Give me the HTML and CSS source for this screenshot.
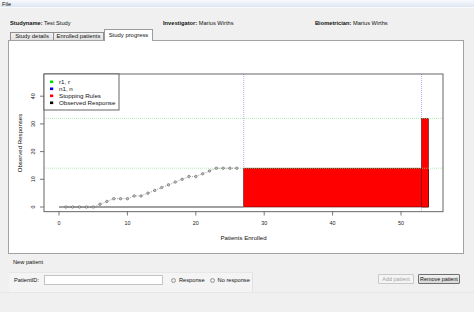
FILE: index.html
```html
<!DOCTYPE html>
<html>
<head>
<meta charset="utf-8">
<link rel="stylesheet" href="styles.css">
</head>
<body>
<div class="menubar"><span class="menu-item">File</span></div>
<div class="header">
  <div><b>Studyname:</b> Test Study</div>
  <div><b>Investigator:</b> Marius Wirths</div>
  <div><b>Biometrician:</b> Marius Wirths</div>
</div>
<div class="tabs">
  <div class="tab t1">Study details</div>
  <div class="tab t2">Enrolled patients</div>
  <div class="tab t3 active">Study progress</div>
</div>
<div class="panel">
  <svg class="plot" width="454" height="212" viewBox="9 41 454 212" xmlns="http://www.w3.org/2000/svg">
    <!-- stopping rules -->
    <rect x="243.7" y="168.2" width="184.7" height="38.8" fill="#ff0000" stroke="#5a0000" stroke-width="0.6"/>
    <rect x="421.5" y="118.4" width="6.9" height="88.6" fill="#ff0000" stroke="#5a0000" stroke-width="0.6"/>
    <!-- r1, r lines -->
    <line x1="44" y1="168.2" x2="443" y2="168.2" stroke="#8fe08f" stroke-width="0.7" stroke-dasharray="1,1"/>
    <line x1="44" y1="118.4" x2="443" y2="118.4" stroke="#8fe08f" stroke-width="0.7" stroke-dasharray="1,1"/>
    <!-- n1, n lines -->
    <line x1="243.7" y1="74" x2="243.7" y2="168" stroke="#a8a8f0" stroke-width="0.9" stroke-dasharray="1,1"/>
    <line x1="421.5" y1="74" x2="421.5" y2="118.2" stroke="#a8a8f0" stroke-width="0.9" stroke-dasharray="1,1"/>
    <line x1="421.5" y1="207.3" x2="421.5" y2="211.7" stroke="#a8a8f0" stroke-width="0.9" stroke-dasharray="1,1"/>
    <!-- zero line -->
    <line x1="59" y1="207" x2="243.7" y2="207" stroke="#808080" stroke-width="1.3"/>
    <!-- observed response -->
    <polyline fill="none" stroke="#666" stroke-width="0.6" stroke-dasharray="1,1.2"
      points="65.84,207 72.68,207 79.52,207 86.36,207 93.2,207 100.04,204.23 106.88,201.46 113.72,198.69 120.56,198.69 127.4,198.69 134.24,195.92 141.08,195.92 147.92,193.15 154.76,190.38 161.6,187.61 168.44,184.84 175.28,182.07 182.12,179.3 188.96,176.53 195.8,176.53 202.64,173.76 209.48,170.99 216.32,168.22 223.16,168.22 230,168.22 236.84,168.22"/>
    <g fill="#c4c4c4" stroke="#555" stroke-width="0.55">
      <circle cx="65.84" cy="207" r="1.25"/>
      <circle cx="72.68" cy="207" r="1.25"/>
      <circle cx="79.52" cy="207" r="1.25"/>
      <circle cx="86.36" cy="207" r="1.25"/>
      <circle cx="93.2" cy="207" r="1.25"/>
      <circle cx="100.04" cy="204.23" r="1.25"/>
      <circle cx="106.88" cy="201.46" r="1.25"/>
      <circle cx="113.72" cy="198.69" r="1.25"/>
      <circle cx="120.56" cy="198.69" r="1.25"/>
      <circle cx="127.4" cy="198.69" r="1.25"/>
      <circle cx="134.24" cy="195.92" r="1.25"/>
      <circle cx="141.08" cy="195.92" r="1.25"/>
      <circle cx="147.92" cy="193.15" r="1.25"/>
      <circle cx="154.76" cy="190.38" r="1.25"/>
      <circle cx="161.6" cy="187.61" r="1.25"/>
      <circle cx="168.44" cy="184.84" r="1.25"/>
      <circle cx="175.28" cy="182.07" r="1.25"/>
      <circle cx="182.12" cy="179.3" r="1.25"/>
      <circle cx="188.96" cy="176.53" r="1.25"/>
      <circle cx="195.8" cy="176.53" r="1.25"/>
      <circle cx="202.64" cy="173.76" r="1.25"/>
      <circle cx="209.48" cy="170.99" r="1.25"/>
      <circle cx="216.32" cy="168.22" r="1.25"/>
      <circle cx="223.16" cy="168.22" r="1.25"/>
      <circle cx="230" cy="168.22" r="1.25"/>
      <circle cx="236.84" cy="168.22" r="1.25"/>
    </g>
    <!-- box -->
    <rect x="44" y="74" width="399" height="137.7" fill="none" stroke="#555" stroke-width="0.9"/>
    <!-- y axis -->
    <g stroke="#555" stroke-width="0.8">
      <line x1="40" y1="207" x2="44" y2="207"/>
      <line x1="40" y1="179.3" x2="44" y2="179.3"/>
      <line x1="40" y1="151.6" x2="44" y2="151.6"/>
      <line x1="40" y1="123.9" x2="44" y2="123.9"/>
      <line x1="40" y1="96.2" x2="44" y2="96.2"/>
    </g>
    <g class="tick" text-anchor="middle">
      <text transform="translate(35 207) rotate(-90)">0</text>
      <text transform="translate(35 179.3) rotate(-90)">10</text>
      <text transform="translate(35 151.6) rotate(-90)">20</text>
      <text transform="translate(35 123.9) rotate(-90)">30</text>
      <text transform="translate(35 96.2) rotate(-90)">40</text>
    </g>
    <!-- x axis -->
    <g stroke="#555" stroke-width="0.8">
      <line x1="59" y1="211.7" x2="59" y2="215.5"/>
      <line x1="127.4" y1="211.7" x2="127.4" y2="215.5"/>
      <line x1="195.8" y1="211.7" x2="195.8" y2="215.5"/>
      <line x1="264.2" y1="211.7" x2="264.2" y2="215.5"/>
      <line x1="332.6" y1="211.7" x2="332.6" y2="215.5"/>
      <line x1="401" y1="211.7" x2="401" y2="215.5"/>
    </g>
    <g class="tick" text-anchor="middle">
      <text x="59" y="225">0</text>
      <text x="127.4" y="225">10</text>
      <text x="195.8" y="225">20</text>
      <text x="264.2" y="225">30</text>
      <text x="332.6" y="225">40</text>
      <text x="401" y="225">50</text>
    </g>
    <text class="axis-title" x="243.5" y="240" text-anchor="middle">Patients Enrolled</text>
    <text class="axis-title" transform="translate(22 143) rotate(-90)" text-anchor="middle">Observed Responses</text>
    <!-- legend -->
    <rect x="44" y="74" width="75" height="36" fill="#fff" stroke="#555" stroke-width="0.9"/>
    <rect x="50" y="80.5" width="3.2" height="2.6" fill="#00e000"/>
    <rect x="50" y="87.5" width="3.2" height="2.6" fill="#0000e0"/>
    <rect x="50" y="94.5" width="3.2" height="2.6" fill="#ff0000"/>
    <rect x="50" y="101.5" width="3.2" height="2.6" fill="#000"/>
    <g class="legend">
      <text x="59" y="84">r1, r</text>
      <text x="59" y="91">n1, n</text>
      <text x="59" y="98">Stopping Rules</text>
      <text x="59" y="105">Observed Response</text>
    </g>
  </svg>
</div>
<div class="newlabel">New patient</div>
<div class="row">
  <div class="group">
    <span class="field-label">PatientID:</span>
    <span class="input"></span>
    <span class="radio"></span><span class="radio-label">Response</span>
    <span class="radio"></span><span class="radio-label">No response</span>
  </div>
  <div class="buttons">
    <span class="btn disabled">Add patient</span>
    <span class="btn">Remove patient</span>
  </div>
</div>
</body>
</html>
```
FILE: styles.css
```css
html, body {
  margin: 0;
  padding: 0;
}
body {
  width: 474px;
  height: 312px;
  overflow: hidden;
  background: #f0f0f0;
  font-family: "Liberation Sans", Arial, sans-serif;
  font-size: 5.7px;
  color: #111;
}
.menubar {
  height: 8px;
  line-height: 8px;
  padding-left: 2px;
  background: linear-gradient(#f7f9fd, #dfe6f2);
  border-bottom: 1px solid #f8f9fc;
  box-sizing: border-box;
}
.header {
  margin-top: 11px;
  height: 8px;
  line-height: 8px;
  padding-left: 10px;
  display: grid;
  grid-template-columns: 153px 152px 1fr;
}
.header b {
  font-weight: bold;
}
.tabs {
  margin-top: 2px;
  height: 11px;
  padding-left: 10px;
  display: flex;
  align-items: flex-end;
}
.tab {
  box-sizing: border-box;
  height: 8px;
  line-height: 7px;
  text-align: center;
  font-size: 5.9px;
  white-space: nowrap;
  border: 1px solid #8f8f8f;
  border-bottom: none;
  background: linear-gradient(#f2f2f2, #e1e1e1);
}
.t1 { width: 44px; }
.t2 { width: 50px; border-left: none; }
.t3 { width: 49px; }
.tab.active {
  height: 12px;
  margin-bottom: -1px;
  line-height: 10px;
  background: #fff;
  position: relative;
  z-index: 2;
  border-color: #9c9c9c;
}
.panel {
  margin-left: 8px;
  width: 456px;
  height: 214px;
  box-sizing: border-box;
  border: 1px solid #a2a2a2;
  background: #fff;
}
.plot {
  display: block;
}
.tick {
  font-family: "Liberation Sans", Arial, sans-serif;
  font-size: 5.4px;
  fill: #222;
}
.axis-title {
  font-family: "Liberation Sans", Arial, sans-serif;
  font-size: 6.1px;
  fill: #111;
}
.legend {
  font-family: "Liberation Sans", Arial, sans-serif;
  font-size: 6.2px;
  fill: #111;
}
.newlabel {
  margin-top: 4px;
  height: 8px;
  line-height: 8px;
  padding-left: 13px;
}
.row {
  margin-top: 6px;
  height: 20px;
  padding-left: 9px;
  padding-right: 14px;
  display: flex;
  border-bottom: 1px solid #e6e6e6;
}
.group {
  box-sizing: border-box;
  width: 244px;
  height: 20px;
  padding: 2px 0 0 5px;
  display: flex;
  align-items: flex-start;
  background: #f4f4f4;
  border-top: 1px solid #e8e8e8;
  border-right: 1px solid #e2e2e2;
}
.field-label {
  height: 10px;
  line-height: 10px;
}
.input {
  box-sizing: border-box;
  margin-left: 5px;
  width: 119px;
  height: 10px;
  background: #fff;
  border: 1px solid #c4c4c4;
}
.radio {
  box-sizing: border-box;
  margin: 2.5px 0 0 8px;
  width: 5.5px;
  height: 5.5px;
  border-radius: 50%;
  border: 0.8px solid #9a9a9a;
  background: radial-gradient(#f4f4f4, #d8d8d8);
}
.radio + .radio-label {
  margin-left: 2.5px;
}
.radio-label {
  height: 10px;
  line-height: 10px;
}
.radio-label + .radio {
  margin-left: 5px;
}
.buttons {
  margin-left: auto;
  margin-top: 2px;
  display: flex;
  gap: 4px;
  align-items: flex-start;
}
.btn {
  box-sizing: border-box;
  height: 10px;
  line-height: 8px;
  padding: 0;
  text-align: center;
  white-space: nowrap;
  border: 1px solid #6f6f6f;
  border-radius: 1px;
  background: linear-gradient(#f2f2f2, #d9d9d9);
  font-size: 5.4px;
}
.btn.disabled {
  width: 36px;
  color: #a3a3a3;
  border-color: #c9c9c9;
  background: #f4f4f4;
}
.btn:not(.disabled) {
  width: 42px;
}
```
